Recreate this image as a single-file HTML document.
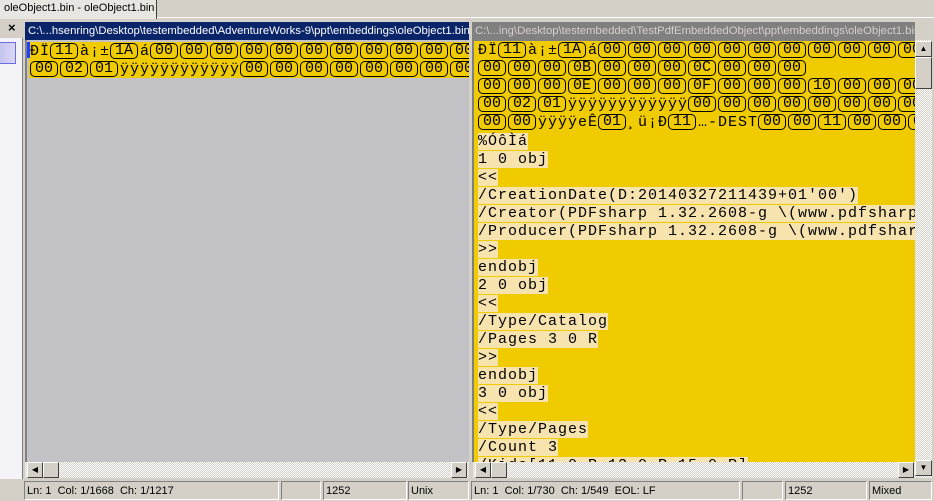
<!DOCTYPE html>
<html><head><meta charset="utf-8"><style>
*{margin:0;padding:0;box-sizing:border-box}
body{width:934px;height:501px;background:#d4d0c8;position:relative;overflow:hidden;font-family:"Liberation Sans",sans-serif;font-size:11px}
.abs{position:absolute}
.mono{font-family:"Liberation Mono",monospace;font-size:15px;letter-spacing:1px;white-space:pre;color:#000}
.row{position:absolute;left:0;height:18px;line-height:19px;white-space:nowrap}
.hl{background:#f7e3ae}
.p{display:inline-block;width:28px;height:16px;border:1px solid #000;border-radius:5px;line-height:14px;text-align:center;margin-right:2px;letter-spacing:0;vertical-align:middle;font-size:15px}
.sb{position:absolute;border:1px solid;border-color:#808080 #fff #fff #808080;height:19px;line-height:18px;padding-left:2px;font-size:11px;top:481px;white-space:nowrap;overflow:hidden}
.btn{position:absolute;background:#d4d0c8;border:1px solid;border-color:#fff #404040 #404040 #fff;width:16px;height:16px}
.track{position:absolute;background-image:repeating-conic-gradient(#fff 0 25%,#d4d0c8 0 50%);background-size:2px 2px}
.title{font-size:11.3px;line-height:18px;white-space:nowrap;overflow:hidden}
</style></head><body>
<div class="abs" style="left:0;top:0;width:934px;height:18px;background:#d4d0c8;border-bottom:1px solid #fff"></div>
<div class="abs" style="left:0;top:0;width:157px;height:19px;background:#e8e6e0;border-right:1px solid #404040;font-size:11px;line-height:17px;padding-left:4px;white-space:nowrap;overflow:hidden">oleObject1.bin - oleObject1.bin</div>
<div class="abs" style="left:0;top:20px;width:23px;height:462px;background:#f4f3f8;border-right:1px solid #808080"></div>
<div class="abs" style="left:0;top:20px;width:23px;height:18px;background:#d4d0c8"></div>
<div class="abs" style="left:8px;top:20px;font-size:13px;font-weight:bold">×</div>
<div class="abs" style="left:0;top:42px;width:16px;height:22px;background:linear-gradient(90deg,#c6c3f0,#d9d8f6);border:1px solid #6c6ce0;border-left:none"></div>
<div class="abs title" style="left:25px;top:22px;width:444px;height:18px;background:#0a246a;color:#fff;padding-left:3px">C:\...hsenring\Desktop\testembedded\AdventureWorks-9\ppt\embeddings\oleObject1.bin</div>
<div class="abs" style="left:25px;top:40px;width:444px;height:423px;background:#c3c2c7;border-left:2px solid #808080;overflow:hidden">
 <div class="mono" style="position:absolute;left:2px;top:2px;width:440px;height:36px;background:#f0cb00"></div>
 <div class="mono row" style="top:2px;left:3px">ÐÏ<span class="p">11</span>à¡±<span class="p">1A</span>á<span class="p">00</span><span class="p">00</span><span class="p">00</span><span class="p">00</span><span class="p">00</span><span class="p">00</span><span class="p">00</span><span class="p">00</span><span class="p">00</span><span class="p">00</span><span class="p">00</span></div>
 <div class="mono row" style="top:20px;left:3px"><span class="p">00</span><span class="p">02</span><span class="p">01</span>ÿÿÿÿÿÿÿÿÿÿÿÿ<span class="p">00</span><span class="p">00</span><span class="p">00</span><span class="p">00</span><span class="p">00</span><span class="p">00</span><span class="p">00</span><span class="p">00</span></div>
 <div class="abs" style="left:0;top:2px;width:3px;height:16px;background:#2040ff"></div>
</div>
<div class="track" style="left:25px;top:462px;width:444px;height:16px"></div>
<div class="btn" style="left:27px;top:462px;font-size:8px;text-align:center;line-height:14px">◀</div>
<div class="btn" style="left:43px;top:462px"></div>
<div class="btn" style="left:451px;top:462px;font-size:8px;text-align:center;line-height:14px">▶</div>
<div class="abs title" style="left:472px;top:22px;width:443px;height:18px;background:#808080;color:#d4d0c8;padding-left:3px">C:\...ing\Desktop\testembedded\TestPdfEmbeddedObject\ppt\embeddings\oleObject1.bin</div>
<div class="abs" style="left:472px;top:40px;width:443px;height:422px;background:#f0cb00;border-left:2px solid #808080;border-top:1px solid #808080;overflow:hidden">
 <div class="mono row" style="top:0;left:4px">ÐÏ<span class="p">11</span>à¡±<span class="p">1A</span>á<span class="p">00</span><span class="p">00</span><span class="p">00</span><span class="p">00</span><span class="p">00</span><span class="p">00</span><span class="p">00</span><span class="p">00</span><span class="p">00</span><span class="p">00</span><span class="p">00</span></div>
 <div class="mono row" style="top:18px;left:4px"><span class="p">00</span><span class="p">00</span><span class="p">00</span><span class="p">0B</span><span class="p">00</span><span class="p">00</span><span class="p">00</span><span class="p">0C</span><span class="p">00</span><span class="p">00</span><span class="p">00</span></div>
 <div class="mono row" style="top:36px;left:4px"><span class="p">00</span><span class="p">00</span><span class="p">00</span><span class="p">0E</span><span class="p">00</span><span class="p">00</span><span class="p">00</span><span class="p">0F</span><span class="p">00</span><span class="p">00</span><span class="p">00</span><span class="p">10</span><span class="p">00</span><span class="p">00</span><span class="p">00</span></div>
 <div class="mono row" style="top:54px;left:4px"><span class="p">00</span><span class="p">02</span><span class="p">01</span>ÿÿÿÿÿÿÿÿÿÿÿÿ<span class="p">00</span><span class="p">00</span><span class="p">00</span><span class="p">00</span><span class="p">00</span><span class="p">00</span><span class="p">00</span><span class="p">00</span></div>
 <div class="mono row" style="top:72px;left:4px"><span class="p">00</span><span class="p">00</span>ÿÿÿÿeÊ<span class="p">01</span>¸ü¡Ð<span class="p">11</span>…-DEST<span class="p">00</span><span class="p">00</span><span class="p">11</span><span class="p">00</span><span class="p">00</span><span class="p">00</span></div>
 <div class="mono row" style="top:91px;left:4px"><span class="hl">%ÓôÌá</span></div>
 <div class="mono row" style="top:109px;left:4px"><span class="hl">1 0 obj</span></div>
 <div class="mono row" style="top:127px;left:4px"><span class="hl">&lt;&lt;</span></div>
 <div class="mono row" style="top:145px;left:4px"><span class="hl">/CreationDate(D:20140327211439+01'00')</span></div>
 <div class="mono row" style="top:163px;left:4px"><span class="hl">/Creator(PDFsharp 1.32.2608-g \(www.pdfsharp.net\))</span></div>
 <div class="mono row" style="top:181px;left:4px"><span class="hl">/Producer(PDFsharp 1.32.2608-g \(www.pdfsharp.net\))</span></div>
 <div class="mono row" style="top:199px;left:4px"><span class="hl">&gt;&gt;</span></div>
 <div class="mono row" style="top:217px;left:4px"><span class="hl">endobj</span></div>
 <div class="mono row" style="top:235px;left:4px"><span class="hl">2 0 obj</span></div>
 <div class="mono row" style="top:253px;left:4px"><span class="hl">&lt;&lt;</span></div>
 <div class="mono row" style="top:271px;left:4px"><span class="hl">/Type/Catalog</span></div>
 <div class="mono row" style="top:289px;left:4px"><span class="hl">/Pages 3 0 R</span></div>
 <div class="mono row" style="top:307px;left:4px"><span class="hl">&gt;&gt;</span></div>
 <div class="mono row" style="top:325px;left:4px"><span class="hl">endobj</span></div>
 <div class="mono row" style="top:343px;left:4px"><span class="hl">3 0 obj</span></div>
 <div class="mono row" style="top:361px;left:4px"><span class="hl">&lt;&lt;</span></div>
 <div class="mono row" style="top:379px;left:4px"><span class="hl">/Type/Pages</span></div>
 <div class="mono row" style="top:397px;left:4px"><span class="hl">/Count 3</span></div>
 <div class="mono row" style="top:415px;left:4px"><span class="hl">/Kids[11 0 R 13 0 R 15 0 R]</span></div>
</div>
<div class="track" style="left:915px;top:40px;width:17px;height:438px"></div>
<div class="btn" style="left:915px;top:41px;width:17px;font-size:8px;text-align:center;line-height:14px">▲</div>
<div class="btn" style="left:915px;top:57px;width:17px;height:32px"></div>
<div class="btn" style="left:915px;top:460px;width:17px;font-size:8px;text-align:center;line-height:14px">▼</div>
<div class="track" style="left:473px;top:462px;width:442px;height:16px"></div>
<div class="btn" style="left:475px;top:462px;font-size:8px;text-align:center;line-height:14px">◀</div>
<div class="btn" style="left:491px;top:462px"></div>
<div class="btn" style="left:898px;top:462px;font-size:8px;text-align:center;line-height:14px">▶</div>
<div class="abs" style="left:0;top:479px;width:934px;height:22px;background:#d4d0c8"></div>
<div class="sb" style="left:24px;width:255px">Ln: 1&nbsp; Col: 1/1668&nbsp; Ch: 1/1217</div>
<div class="sb" style="left:281px;width:40px"></div>
<div class="sb" style="left:323px;width:84px">1252</div>
<div class="sb" style="left:408px;width:61px">Unix</div>
<div class="sb" style="left:471px;width:269px">Ln: 1&nbsp; Col: 1/730&nbsp; Ch: 1/549&nbsp; EOL: LF</div>
<div class="sb" style="left:742px;width:41px"></div>
<div class="sb" style="left:785px;width:82px">1252</div>
<div class="sb" style="left:869px;width:63px">Mixed</div>
</body></html>
